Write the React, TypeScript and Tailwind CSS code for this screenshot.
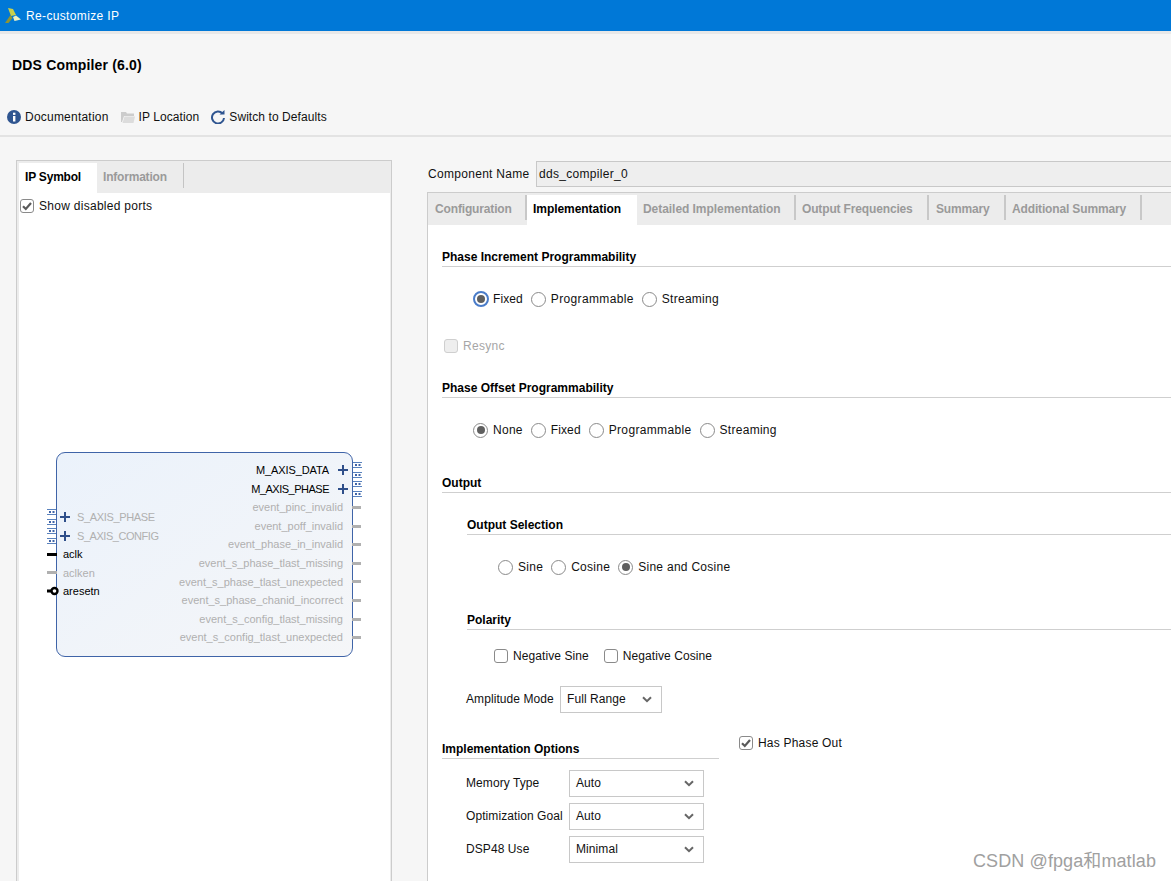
import React from "react";

const font = { fontFamily: '"Liberation Sans", Arial, "Noto Sans CJK SC", sans-serif' };

function CheckBox({ checked, disabled }: { checked?: boolean; disabled?: boolean }) {
  return (
    <span
      className={
        "w-[14px] h-[14px] rounded-[3px] border flex items-center justify-center shrink-0 " +
        (disabled ? "border-[#cfcfcf] bg-[#eeeeee]" : "border-[#8a8a8a] bg-white")
      }
    >
      {checked && (
        <svg width="12" height="12" viewBox="0 0 12 12">
          <path d="M2 6.2 L4.8 9 L10 3" fill="none" stroke="#5a5a5a" strokeWidth="2.2" />
        </svg>
      )}
    </span>
  );
}

function Radio({ label, on, focus, track }: { label: string; on?: boolean; focus?: boolean; track?: string }) {
  return (
    <div className={"flex items-center " + (focus ? "gap-[4px]" : "gap-[5px]")}>
      <span
        className={
          "rounded-full flex items-center justify-center bg-white " +
          (focus ? "w-[16px] h-[16px] border-2 border-[#4a7cc9]" : "w-[15px] h-[15px] border border-[#8a8a8a]")
        }
      >
        {on && <span className="w-[8px] h-[8px] rounded-full bg-[#5f5f5f]" />}
      </span>
      <span className={track || "tracking-[0.28px]"}>{label}</span>
    </div>
  );
}

function Heading({ title, className }: { title: string; className?: string }) {
  return (
    <div className={"h-[19px] border-b border-[#cfcfcf] font-bold tracking-normal text-black leading-[18px] " + (className || "")}>
      {title}
    </div>
  );
}

function Select({ value, width }: { value: string; width: string }) {
  return (
    <div className={"h-[27px] bg-white border border-[#c8c8c8] flex items-center justify-between pl-[6px] pr-[9px] " + width}>
      <span className="pb-[2px]">{value}</span>
      <svg width="10" height="7" viewBox="0 0 10 7">
        <path d="M1 1.2 L5 5.2 L9 1.2" fill="none" stroke="#666666" strokeWidth="2" />
      </svg>
    </div>
  );
}

function BusIcon() {
  return (
    <svg width="9" height="16" viewBox="0 0 9 16" className="shrink-0">
      <path d="M0 .5H9M0 5.5H9M0 10.5H9M0 15.5H9" stroke="#5a82bd" strokeWidth="1" fill="none" />
      <path d="M2 3H4M5.5 3H7.5M2 13H4M5.5 13H7.5" stroke="#3f64a8" strokeWidth="2" fill="none" />
    </svg>
  );
}

function Plus() {
  return (
    <svg width="10" height="10" viewBox="0 0 10 10" className="shrink-0">
      <path d="M5 0V10M0 5H10" stroke="#2f4f8a" strokeWidth="2" />
    </svg>
  );
}

const rightPorts = [
  "event_pinc_invalid",
  "event_poff_invalid",
  "event_phase_in_invalid",
  "event_s_phase_tlast_missing",
  "event_s_phase_tlast_unexpected",
  "event_s_phase_chanid_incorrect",
  "event_s_config_tlast_missing",
  "event_s_config_tlast_unexpected",
];

function IpSymbol() {
  return (
    <div className="w-[297px] h-[205px] ml-[37px] mt-[237px] rounded-[9px] border border-[#3f64a8] bg-gradient-to-br from-[#ebf2fb] to-[#f5f6f8] flex justify-between text-[11px] tracking-normal text-[#b0b0b0]">
      <div className="pt-[55px] flex flex-col">
        {[
          ["S_AXIS_PHASE", "tracking-[-0.35px]"],
          ["S_AXIS_CONFIG", "tracking-[-0.45px]"],
        ].map(([p, t]) => (
          <div key={p} className="h-[18.5px] flex items-center ml-[-10px]">
            <BusIcon />
            <span className="ml-[4px] mr-[7px]"><Plus /></span>
            <span className={t}>{p}</span>
          </div>
        ))}
        <div className="h-[18.5px] flex items-center ml-[-10px] text-black">
          <span className="w-[10px] h-[3px] bg-black mr-[6px]" />
          <span>aclk</span>
        </div>
        <div className="h-[18.5px] flex items-center ml-[-10px]">
          <span className="w-[10px] h-[3px] bg-[#b0b0b0] mr-[6px]" />
          <span>aclken</span>
        </div>
        <div className="h-[18.5px] flex items-center ml-[-10px] text-black">
          <svg width="12" height="10" viewBox="0 0 12 10" className="mr-[4px]">
            <path d="M0 5H5" stroke="black" strokeWidth="3" />
            <circle cx="7.5" cy="5" r="3" fill="white" stroke="black" strokeWidth="2.4" />
          </svg>
          <span>aresetn</span>
        </div>
      </div>
      <div className="pt-[8px] flex flex-col items-end">
        {[
          ["M_AXIS_DATA", "tracking-[-0.1px]"],
          ["M_AXIS_PHASE", "tracking-[-0.5px]"],
        ].map(([p, t]) => (
          <div key={p} className="h-[18.6px] flex items-center text-black mr-[-10px]">
            <span className={t}>{p}</span>
            <span className="ml-[9px] mr-[5px]"><Plus /></span>
            <BusIcon />
          </div>
        ))}
        {rightPorts.map((p) => (
          <div key={p} className="h-[18.6px] flex items-center mr-[-9px]">
            <span>{p}</span>
            <span className="w-[9px] h-[3px] bg-[#b0b0b0] ml-[9px]" />
          </div>
        ))}
      </div>
    </div>
  );
}

const tabs = [
  { t: "Configuration", c: "w-[99px] pl-[7px]" },
  { t: "Implementation", c: "" },
  { t: "Detailed Implementation", c: "w-[159px] pl-[6px] tracking-[-0.05px]" },
  { t: "Output Frequencies", c: "w-[133px] pl-[6px]" },
  { t: "Summary", c: "w-[77px] pl-[7px]" },
  { t: "Additional Summary", c: "w-[136px] pl-[6px]" },
];

export default function App() {
  return (
    <div style={font} className="relative w-[1171px] h-[881px] overflow-hidden bg-[#f6f6f6] text-[12px] tracking-[0.08px] text-[#111111]">
      {/* title bar */}
      <div className="h-[31px] bg-[#0078d7] flex items-center pl-[5px] text-white text-[12px] tracking-[0.35px]">
        <svg width="16" height="16" viewBox="0 0 16 16" className="mr-[5px]">
          <path d="M3 0 L8 1 L11 7 L6 8 Z" fill="#c9d04a" />
          <path d="M8 9 L11 7.5 L16 11.5 L9.5 13 Z" fill="#eef0c0" />
          <path d="M5.5 7 L7.5 10 L3.5 15 L0 15 Z" fill="#8f9434" />
        </svg>
        Re-customize IP
      </div>
      <div className="h-[3px] bg-[#e8e8e8]" />

      {/* header */}
      <div className="h-[66px] pl-[12px] pt-[22px] font-bold text-[14px] tracking-[0.17px] text-black leading-[18px]">DDS Compiler (6.0)</div>

      {/* toolbar */}
      <div className="h-[37px] border-b-2 border-[#e3e3e3] flex items-center pl-[7px] pt-[2px] pb-[4px]">
        <svg width="14" height="14" viewBox="0 0 14 14" className="mr-[4px]">
          <circle cx="7" cy="7" r="7" fill="#2f5590" />
          <rect x="6" y="6" width="2.4" height="5.5" fill="white" />
          <rect x="6" y="2.7" width="2.4" height="2.2" fill="white" />
        </svg>
        <span className="tracking-[0.22px]">Documentation</span>
        <svg width="14" height="12" viewBox="0 0 14 12" className="ml-[12px] mr-[4px]">
          <path d="M0 1H5L6 2.5H13V5H3L1 11H0Z" fill="#cccccc" />
          <path d="M3.5 5.5H14L12.5 12H1.5Z" fill="#dcdcdc" />
        </svg>
        <span>IP Location</span>
        <svg width="14" height="14" viewBox="0 0 14 14" className="ml-[12px] mr-[4px]">
          <path d="M11.5 3.5A6 6 0 1 0 13 8" fill="none" stroke="#2f5590" strokeWidth="2" />
          <path d="M8.5 4.5H13.5V0Z" fill="#2f5590" />
        </svg>
        <span>Switch to Defaults</span>
      </div>

      {/* body */}
      <div className="flex pl-[16px] pt-[23px]">
        <div className="w-[376px] h-[730px] shrink-0 border border-[#cccccc] bg-[#ececec] pl-[2px] pr-[1px] pt-[2px]">
          <div className="h-[30px] flex items-stretch font-bold tracking-[-0.2px]">
            <div className="w-[78px] bg-white flex items-center pl-[6px] pb-[2px] text-black">IP Symbol</div>
            <div className="w-[87px] flex items-center pl-[6px] text-[#9a9a9a] border-r border-[#c4c4c4] mb-[5px]">
              <span className="mt-[3px]">Information</span>
            </div>
          </div>
          <div className="bg-white h-full">
            <div className="flex items-center gap-[5px] pl-[1px] pt-[4px]">
              <CheckBox checked />
              <span className="tracking-[0.28px]">Show disabled ports</span>
            </div>
            <IpSymbol />
          </div>
        </div>

        <div className="ml-[35px] flex-1 min-w-0 pt-[1px] mr-[-10px]">
          <div className="flex items-center h-[26px] ml-[1px] tracking-[0.3px]">
            <span className="w-[108px]">Component Name</span>
            <div className="flex-1 h-[26px] mr-[-1px] bg-[#eeeeee] border border-[#c8c8c8] flex items-center pl-[2px]">dds_compiler_0</div>
          </div>

          <div className="mt-[5px] h-[700px] border border-[#cccccc] bg-white">
            <div className="h-[32px] bg-[#ececec] flex font-bold tracking-[-0.15px] text-[#9a9a9a] items-stretch">
              {tabs.map(({ t, c }) =>
                t === "Implementation" ? (
                  <div key={t} className="w-[110px] mt-[2px] pb-[3px] bg-white text-black flex items-center pl-[6px] tracking-[-0.05px]">{t}</div>
                ) : (
                  <div key={t} className={c + " mt-[2px] mb-[5px] pt-[2px] flex items-center border-r-2 border-[#c8c8c8]"}>{t}</div>
                )
              )}
            </div>

            <div className="pl-[14px]">
              <Heading title="Phase Increment Programmability" className="mt-[23px]" />
              <div className="flex gap-[8px] pl-[31px] mt-[24px] h-[16px] items-center">
                <Radio label="Fixed" on focus track="tracking-[0.1px]" />
                <Radio label="Programmable" track="tracking-[0.35px]" />
                <Radio label="Streaming" />
              </div>
              <div className="flex items-center gap-[5px] mt-[31px] h-[16px] ml-[2px] text-[#a6a6a6]">
                <CheckBox disabled />
                <span className="tracking-[0.28px]">Resync</span>
              </div>

              <Heading title="Phase Offset Programmability" className="mt-[25px]" />
              <div className="flex gap-[8px] pl-[31px] mt-[24px] h-[16px] items-center">
                <Radio label="None" on />
                <Radio label="Fixed" track="tracking-[0.1px]" />
                <Radio label="Programmable" track="tracking-[0.35px]" />
                <Radio label="Streaming" />
              </div>

              <Heading title="Output" className="mt-[36px]" />
              <div className="pl-[25px]">
                <Heading title="Output Selection" className="mt-[23px]" />
                <div className="flex gap-[8px] pl-[31px] mt-[24px] h-[16px] items-center">
                  <Radio label="Sine" />
                  <Radio label="Cosine" />
                  <Radio label="Sine and Cosine" on />
                </div>
                <Heading title="Polarity" className="mt-[36px]" />
                <div className="flex gap-[15px] pl-[27px] mt-[18px] h-[16px] items-center">
                  <div className="flex items-center gap-[5px]"><CheckBox /><span>Negative Sine</span></div>
                  <div className="flex items-center gap-[5px]"><CheckBox /><span>Negative Cosine</span></div>
                </div>
              </div>

              <div className="flex items-center ml-[24px] mt-[22px]">
                <span className="w-[94px] pb-[2px]">Amplitude Mode</span>
                <Select value="Full Range" width="w-[102px]" />
              </div>

              <div className="flex mt-[23px]">
                <div className="w-[277px]">
                  <Heading title="Implementation Options" className="mt-[4px]" />
                  <div className="pl-[24px] mt-[11px] flex flex-col gap-[6px]">
                    {[
                      ["Memory Type", "Auto"],
                      ["Optimization Goal", "Auto"],
                      ["DSP48 Use", "Minimal"],
                    ].map(([l, v]) => (
                      <div key={l} className="flex items-center">
                        <span className="w-[103px] whitespace-nowrap pb-[2px]">{l}</span>
                        <Select value={v} width="w-[135px]" />
                      </div>
                    ))}
                  </div>
                </div>
                <div className="flex items-center h-[14px] gap-[5px] ml-[20px]">
                  <CheckBox checked />
                  <span className="pb-[1px] tracking-[0.2px]">Has Phase Out</span>
                </div>
              </div>
            </div>
          </div>
        </div>
      </div>

      {/* watermark */}
      <div className="absolute left-[973px] top-[850px] text-[18px] tracking-[0.1px] text-[#a0a0a0] leading-[22px] whitespace-nowrap">CSDN @fpga和matlab</div>
    </div>
  );
}
